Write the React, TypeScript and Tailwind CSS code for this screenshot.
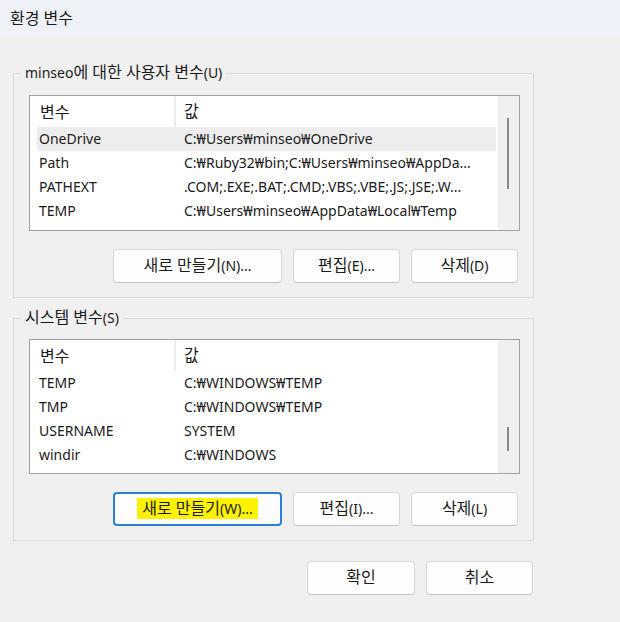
import React from "react";

const font = { fontFamily: '"Noto Sans", "Noto Sans CJK KR", sans-serif' };

function K({ children }: { children: React.ReactNode }) {
  return <span className="text-[16px] leading-[14px]">{children}</span>;
}

type Row = [string, string];

function ListBox({ rows, height, thumbTop, selected }: { rows: Row[]; height: string; thumbTop: string; selected?: number }) {
  return (
    <div className={`ml-[15px] w-[491px] ${height} border border-[#9ea2a8] bg-white flex overflow-hidden`}>
      <div className="flex-1 flex flex-col">
        <div className="h-[31px] flex items-center shrink-0">
          <div className="w-[146px] h-full flex items-center pl-[10px] border-r-2 border-[#ececec]"><K>변수</K></div>
          <div className="pl-[8px]"><K>값</K></div>
        </div>
        {rows.map((r, i) => (
          <div
            key={i}
            className={`h-[24px] ml-[7px] flex items-center shrink-0 ${i === selected ? "bg-[#ededed]" : ""}`}
          >
            <div className="w-[139px] pl-[2px] whitespace-nowrap">{r[0]}</div>
            <div className="pl-[8px] whitespace-nowrap">{r[1]}</div>
          </div>
        ))}
      </div>
      <div className="w-[2px] bg-white" />
      <div className="w-[21px] bg-[#f0f0f0] relative">
        <div className={`absolute left-[9px] ${thumbTop} w-[2px] bg-[#8a8a8a]`} />
      </div>
    </div>
  );
}

function Btn({ children, w, focused }: { children: React.ReactNode; w: string; focused?: boolean }) {
  return (
    <div
      className={`${w} h-[34px] rounded-[4px] bg-[#fdfdfd] flex items-center justify-center ${
        focused ? "border-2 border-[#2b7fd4]" : "border border-[#d6d6d6] border-b-[#c4c4c4]"
      }`}
    >
      <div className="leading-[20px] whitespace-nowrap">{children}</div>
    </div>
  );
}

export default function App() {
  const userRows: Row[] = [
    ["OneDrive", "C:₩Users₩minseo₩OneDrive"],
    ["Path", "C:₩Ruby32₩bin;C:₩Users₩minseo₩AppDa..."],
    ["PATHEXT", ".COM;.EXE;.BAT;.CMD;.VBS;.VBE;.JS;.JSE;.W..."],
    ["TEMP", "C:₩Users₩minseo₩AppData₩Local₩Temp"],
  ];
  const sysRows: Row[] = [
    ["TEMP", "C:₩WINDOWS₩TEMP"],
    ["TMP", "C:₩WINDOWS₩TEMP"],
    ["USERNAME", "SYSTEM"],
    ["windir", "C:₩WINDOWS"],
  ];
  return (
    <div className="w-[620px] h-[622px] bg-[#f0f0f0] text-[14px] leading-[20px] text-[#1a1a1a] overflow-hidden flex flex-col" style={font}>
      <div className="h-[36px] bg-[#eef2f8] flex items-center px-[10px] text-[16px] shrink-0">환경 변수</div>

      <fieldset className="mt-[27px] ml-[13px] w-[521px] border border-[#dcdcdc] pb-[14px]">
        <legend className="ml-[8px] px-[3px] h-[20px] leading-[20px] whitespace-nowrap">minseo<K>에 대한 사용자 변수</K>(U)</legend>
        <div className="mt-[12px]">
          <ListBox rows={userRows} height="h-[136px]" thumbTop="top-[22px] h-[71px]" selected={0} />
        </div>
        <div className="mt-[18px] flex justify-end gap-[11px] pr-[15px]">
          <Btn w="w-[169px]"><K>새로 만들기</K>(N)...</Btn>
          <Btn w="w-[107px]"><K>편집</K>(E)...</Btn>
          <Btn w="w-[107px]"><K>삭제</K>(D)</Btn>
        </div>
      </fieldset>

      <fieldset className="mt-[10px] ml-[13px] w-[521px] border border-[#dcdcdc] pb-[14px]">
        <legend className="ml-[8px] px-[3px] h-[20px] leading-[20px] whitespace-nowrap"><K>시스템 변수</K>(S)</legend>
        <div className="mt-[11px]">
          <ListBox rows={sysRows} height="h-[135px]" thumbTop="top-[87px] h-[24px]" />
        </div>
        <div className="mt-[18px] flex justify-end gap-[11px] pr-[15px]">
          <Btn w="w-[169px]" focused>
            <span className="bg-[#fff200] px-[5px] py-[1px]"><K>새로 만들기</K>(W)...</span>
          </Btn>
          <Btn w="w-[107px]"><K>편집</K>(I)...</Btn>
          <Btn w="w-[107px]"><K>삭제</K>(L)</Btn>
        </div>
      </fieldset>

      <div className="mt-[20px] w-[533px] flex justify-end gap-[11px]">
        <Btn w="w-[108px]"><K>확인</K></Btn>
        <Btn w="w-[107px]"><K>취소</K></Btn>
      </div>
    </div>
  );
}
